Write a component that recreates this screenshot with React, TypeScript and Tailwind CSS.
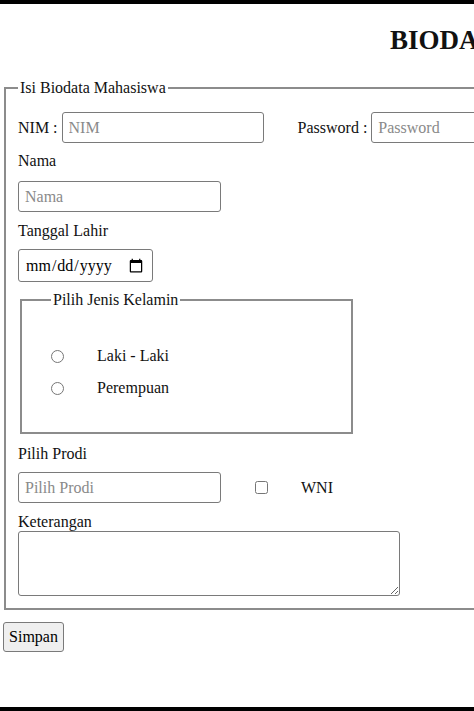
import React from "react";

export default function App() {
  const inputCls =
    "h-[31px] border border-[#7a7a7a] rounded-[3px] bg-white px-[6px] text-[16px] text-black placeholder:text-[#8a8a8a] outline-none";
  return (
    <div className="w-[474px] h-[711px] overflow-hidden bg-white flex flex-col [font-family:'Liberation_Serif','Times_New_Roman',serif] text-[16px] text-[#111]">
      <div className="h-[4px] shrink-0 bg-black" />
      <h1 className="mt-[21px] pl-[390px] whitespace-nowrap text-[27px] font-bold leading-[31px]">
        BIODATA MAHASISWA
      </h1>
      <fieldset className="mt-[23px] ml-[4px] w-[900px] shrink-0 border-2 border-[#8c8c8c] px-[12px] pt-0 pb-[12px]">
        <legend className="px-[2px] leading-[18px]">Isi Biodata Mahasiswa</legend>
        <div className="mt-[15px] flex items-center h-[31px]">
          <span className="leading-[18px]">NIM :</span>
          <input className={`${inputCls} ml-[4px] w-[202px]`} placeholder="NIM" />
          <span className="ml-[34px] leading-[18px]">Password :</span>
          <input type="password" className={`${inputCls} ml-[4px] w-[202px]`} placeholder="Password" />
        </div>
        <div className="mt-[9px] leading-[18px]">Nama</div>
        <input className={`${inputCls} mt-[11px] block w-[203px]`} placeholder="Nama" />
        <div className="mt-[10px] leading-[18px]">Tanggal Lahir</div>
        <input
          type="date"
          className="mt-[9px] block h-[33px] w-[135px] border border-[#7a7a7a] rounded-[3px] bg-white px-[6px] text-[16px] text-black"
        />
        <fieldset className="mt-[9px] ml-[2px] w-[333px] border-2 border-[#8c8c8c] px-0 pt-0 pb-[28px]">
          <legend className="ml-[29px] px-[2px] leading-[18px]">Pilih Jenis Kelamin</legend>
          <div className="mt-[31px]">
            <label className="flex items-center h-[32px] pl-[29px]">
              <input type="radio" name="jk" className="m-0 w-[13px] h-[13px]" />
              <span className="ml-[33px] leading-[18px]">Laki - Laki</span>
            </label>
            <label className="flex items-center h-[32px] pl-[29px]">
              <input type="radio" name="jk" className="m-0 w-[13px] h-[13px]" />
              <span className="ml-[33px] leading-[18px]">Perempuan</span>
            </label>
          </div>
        </fieldset>
        <div className="mt-[11px] leading-[18px]">Pilih Prodi</div>
        <div className="mt-[9px] flex items-center h-[31px]">
          <input className={`${inputCls} w-[203px]`} placeholder="Pilih Prodi" />
          <input type="checkbox" className="ml-[34px] m-0 w-[13px] h-[13px]" />
          <span className="ml-[33px] leading-[18px]">WNI</span>
        </div>
        <div className="mt-[10px] leading-[18px]">Keterangan</div>
        <textarea className="block h-[65px] w-[382px] border border-[#7a7a7a] rounded-[3px] bg-white px-[4px] text-[16px] text-black" />
      </fieldset>
      <button className="mt-[12px] ml-[3px] self-start h-[30px] w-[61px] border border-[#7a7a7a] rounded-[3px] bg-[#efefef] text-[16px] leading-[18px] text-black">
        Simpan
      </button>
      <div className="flex-1" />
      <div className="h-[4px] shrink-0 bg-black" />
    </div>
  );
}
